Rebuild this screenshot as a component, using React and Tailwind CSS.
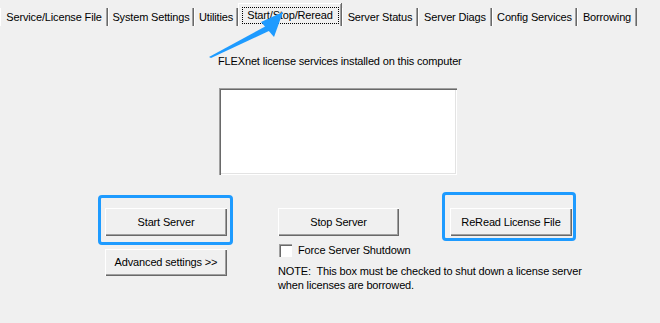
import React from "react";

const font = { fontFamily: '"Liberation Sans", Arial, sans-serif' };

function Tab({ label, w, selected }) {
  if (selected) {
    return (
      <div
        className={`relative flex h-[23px] items-center justify-center border-l border-t border-white bg-[#f0f0f0] shadow-[inset_-1px_0_0_#a0a0a0,1px_0_0_#696969]`}
        style={{ width: w }}
      >
        <div className="flex h-[17px] w-[97px] items-center justify-center border border-dotted border-black">
          {label}
        </div>
      </div>
    );
  }
  return (
    <div
      className="flex h-[18px] items-center justify-center border-l border-white bg-[#f0f0f0] shadow-[inset_-1px_0_0_#a0a0a0,1px_0_0_#696969]"
      style={{ width: w }}
    >
      {label}
    </div>
  );
}

function WinButton({ children, className = "" }) {
  return (
    <div
      className={`flex items-center justify-center bg-[#f0f0f0] text-black shadow-[inset_1px_1px_0_#ffffff,inset_-1px_-1px_0_#696969,inset_-2px_-2px_0_#a0a0a0] ${className}`}
    >
      {children}
    </div>
  );
}

export default function App() {
  const tabs = [
    ["Service/License File", 107],
    ["System Settings", 85],
    ["Utilities", 43],
    ["Start/Stop/Reread", 103, true],
    ["Server Status", 75],
    ["Server Diags", 73],
    ["Config Services", 84],
    ["Borrowing", 59],
  ];
  return (
    <div
      className="relative h-[323px] w-[660px] overflow-hidden bg-[#f0f0f0] text-[11px] leading-none tracking-[-0.15px] text-black"
      style={font}
    >
      {/* Tab strip */}
      <div className="flex h-[26px] items-end gap-px pt-[3px]">
        {tabs.map(([l, w, s]) => (
          <Tab key={l} label={l} w={w} selected={s} />
        ))}
      </div>

      {/* Caption */}
      <div className="pl-[218px] pt-[30px]">FLEXnet license services installed on this computer</div>

      {/* List box */}
      <div className="ml-[219px] mt-[21px] h-[87px] w-[238px] bg-white shadow-[inset_1px_1px_0_#a0a0a0,inset_2px_2px_0_#696969,inset_-1px_-1px_0_#ffffff,inset_-2px_-2px_0_#e3e3e3]" />

      {/* Buttons area */}
      <div className="mt-[33px] flex">
        <div className="ml-[105px] flex w-[122px] flex-col gap-[13px]">
          <div className="relative">
            <WinButton className="h-[28px] w-[122px]">Start Server</WinButton>
            <div className="pointer-events-none absolute -bottom-[9px] -left-[7px] -right-[6px] -top-[13px] rounded-[4px] border-[3px] border-[#1e9bff]" />
          </div>
          <WinButton className="h-[27px] w-[122px]">Advanced settings &gt;&gt;</WinButton>
        </div>

        <div className="ml-[51px] flex w-[172px] flex-col">
          <WinButton className="h-[28px] w-[121px]">Stop Server</WinButton>
          <div className="mt-[8px] flex items-center gap-[6px] pl-[1px]">
            <div className="h-[13px] w-[13px] bg-white shadow-[inset_1px_1px_0_#a0a0a0,inset_2px_2px_0_#696969,inset_-1px_-1px_0_#ffffff]" />
            <span>Force Server Shutdown</span>
          </div>
          <div className="mt-[7px] whitespace-pre leading-[14px]">
            {"NOTE:  This box must be checked to shut down a license server\nwhen licenses are borrowed."}
          </div>
        </div>

        <div>
          <div className="relative">
            <WinButton className="h-[28px] w-[122px]">ReRead License File</WinButton>
            <div className="pointer-events-none absolute -bottom-[5px] -left-[8px] -right-[4px] -top-[16px] rounded-[4px] border-[3px] border-[#1e9bff]" />
          </div>
        </div>
      </div>

      {/* Annotation arrow */}
      <svg className="pointer-events-none absolute left-0 top-0" width="660" height="323">
        <polygon points="209,57 268,25 271,30 211,58" fill="#1e9bff" />
        <polygon points="283,12 261,22 274,37" fill="#1e9bff" />
      </svg>
    </div>
  );
}
